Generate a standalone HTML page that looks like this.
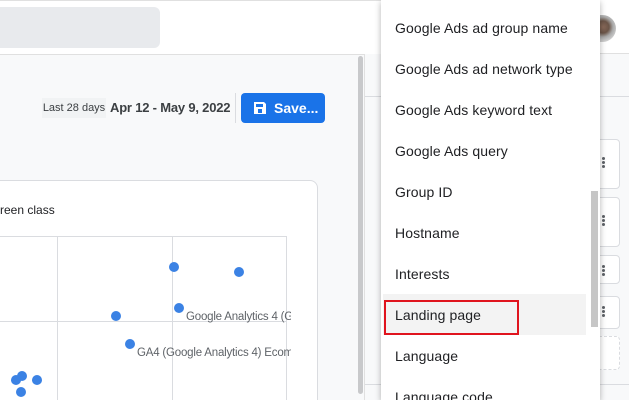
<!DOCTYPE html>
<html><head><style>
*{margin:0;padding:0;box-sizing:border-box}
html,body{width:629px;height:400px;overflow:hidden}
body{position:relative;background:#fff;font-family:"Liberation Sans",Arial,sans-serif;color:#202124}
.a{position:absolute}
.dot{position:absolute;width:10px;height:10px;border-radius:50%;background:#3b82e4}
.item{position:absolute;left:395px;font-size:14px;color:#202124;letter-spacing:0.1px}
.card{position:absolute;left:590px;width:30px;background:#fff;border:1px solid #dadce0;border-radius:4px}
.keb{position:absolute;left:602px;width:3px}
.keb i{display:block;width:3px;height:3px;border-radius:50%;background:#5f6368;margin-bottom:1px}
</style></head><body>
<div class="a" style="left:0;top:0;width:629px;height:1px;background:#e0e0e0"></div>
<div class="a" style="left:0;top:7px;width:160px;height:41px;background:#e8eaed;border-radius:0 6px 6px 0"></div>
<div class="a" style="left:0;top:54px;width:629px;height:346px;background:#f8f9fa;border-top:1px solid #e0e0e0"></div>
<div class="a" style="left:42px;top:98px;width:64px;height:20px;background:#f1f3f4;font-size:11px;color:#3c4043;line-height:20px;text-align:center">Last 28 days</div>
<div class="a" style="left:110px;top:100px;font-size:13px;font-weight:bold;color:#3c4043;white-space:nowrap;letter-spacing:-0.2px">Apr 12 - May 9, 2022</div>
<div class="a" style="left:235px;top:93px;width:1px;height:30px;background:#dadce0"></div>
<div class="a" style="left:241px;top:93px;width:84px;height:30px;background:#1a73e8;border-radius:4px;color:#fff;font-size:14px;font-weight:bold;line-height:30px;padding-left:33px">Save...</div>
<svg class="a" style="left:253px;top:101px" width="14" height="14" viewBox="0 0 14 14"><path d="M1 1h10l2 2v10H1z" fill="#fff"/><rect x="3" y="3" width="7" height="3" fill="#1a73e8"/><rect x="5" y="8" width="4" height="4" fill="#1a73e8"/></svg>
<div class="a" style="left:-10px;top:180px;width:328px;height:240px;background:#fff;border:1px solid #dadce0;border-radius:8px"></div>
<div class="a" style="left:0;top:203px;font-size:12px;color:#202124">reen class</div>
<div class="a" style="left:-1px;top:236px;width:288px;height:170px;border:1px solid #dadce0"></div>
<div class="a" style="left:57px;top:236px;width:1px;height:170px;background:#dadce0"></div>
<div class="a" style="left:172px;top:236px;width:1px;height:170px;background:#dadce0"></div>
<div class="a" style="left:0;top:321px;width:287px;height:1px;background:#dadce0"></div>
<div class="dot" style="left:169px;top:262px"></div>
<div class="dot" style="left:234px;top:267px"></div>
<div class="dot" style="left:174px;top:303px"></div>
<div class="dot" style="left:111px;top:311px"></div>
<div class="dot" style="left:125px;top:339px"></div>
<div class="dot" style="left:17px;top:371px"></div>
<div class="dot" style="left:11px;top:375px"></div>
<div class="dot" style="left:32px;top:375px"></div>
<div class="dot" style="left:16px;top:387px"></div>
<div class="a" style="left:186px;top:311px;font-size:11.5px;color:#5f6368;width:105px;overflow:hidden;white-space:nowrap;letter-spacing:-0.2px">Google Analytics 4 (G</div>
<div class="a" style="left:137px;top:347px;font-size:11.5px;color:#5f6368;width:154px;overflow:hidden;white-space:nowrap;letter-spacing:-0.2px">GA4 (Google Analytics 4) Ecom</div>
<div class="a" style="left:358px;top:56px;width:5px;height:338px;background:#c8c9cb;border-radius:3px"></div>
<div class="a" style="left:364px;top:54px;width:265px;height:346px;background:#f8f9fa;border-left:1px solid #e0e0e0"></div>
<div class="a" style="left:365px;top:96px;width:264px;height:1px;background:#dadce0"></div>
<div class="a" style="left:365px;top:384px;width:264px;height:1px;background:#dadce0"></div>
<div class="card" style="top:139px;height:50px"></div>
<div class="card" style="top:197px;height:50px"></div>
<div class="card" style="top:255px;height:29px"></div>
<div class="card" style="top:296px;height:33px"></div>
<div class="card" style="top:336px;height:34px;border-style:dashed"></div>
<div class="keb" style="top:157px"><i></i><i></i><i></i></div>
<div class="keb" style="top:215px"><i></i><i></i><i></i></div>
<div class="keb" style="top:265px"><i></i><i></i><i></i></div>
<div class="keb" style="top:306px"><i></i><i></i><i></i></div>
<div class="a" style="left:600px;top:0;width:29px;height:54px;background:#fff;border-bottom:1px solid #e0e0e0"></div>
<div class="a" style="left:600px;top:15px;width:16px;height:27px;border-radius:0 14px 14px 0;background:radial-gradient(circle at 3px 12px,#8a6a5a 0,#6b5548 6px,#a9a9a9 10px,#ccc 14px)"></div>
<div class="a" style="left:381px;top:0;width:219px;height:400px;background:#fff;box-shadow:0 2px 6px rgba(0,0,0,.3)"></div>
<div class="a" style="left:383px;top:294px;width:203px;height:41px;background:#f3f3f3"></div>
<div class="a" style="left:384px;top:300px;width:135px;height:35px;border:2px solid #e0141e"></div>
<div class="a" style="left:591px;top:191px;width:7px;height:136px;background:#c6c6c6"></div>
<div class="item" style="top:20px">Google Ads ad group name</div>
<div class="item" style="top:61px">Google Ads ad network type</div>
<div class="item" style="top:102px">Google Ads keyword text</div>
<div class="item" style="top:143px">Google Ads query</div>
<div class="item" style="top:184px">Group ID</div>
<div class="item" style="top:225px">Hostname</div>
<div class="item" style="top:266px">Interests</div>
<div class="item" style="top:307px">Landing page</div>
<div class="item" style="top:348px">Language</div>
<div class="item" style="top:389px">Language code</div>
</body></html>
